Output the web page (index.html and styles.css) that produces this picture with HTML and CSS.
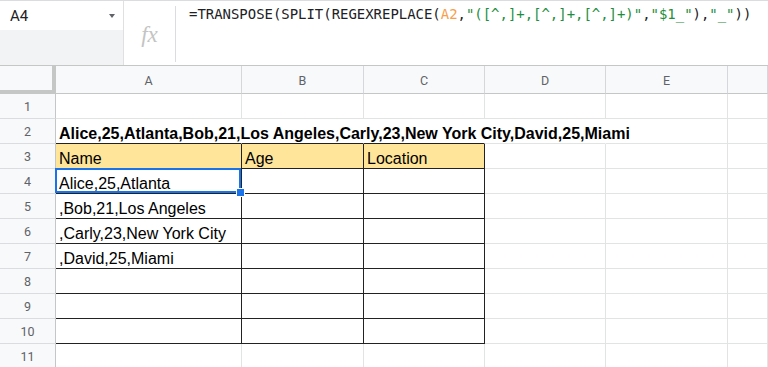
FILE: index.html
```html
<!DOCTYPE html>
<html lang="en">

<head>
    <meta charset="UTF-8">
    <meta name="viewport" content="width=device-width, initial-scale=1.0">
    <title>TRANSPOSE / SPLIT / REGEXREPLACE</title>
    <link rel="stylesheet" href="styles.css">
</head>

<body>

    <div class="formula-bar">
        <div class="name-box">
            <div class="name-box-field">
                <span>A4</span>
                <span class="arrow"></span>
            </div>
            <div class="name-box-rest"></div>
        </div>
        <div class="fx">fx</div>
        <div class="divider"></div>
        <div class="formula">=TRANSPOSE(SPLIT(REGEXREPLACE(<span class="ref">A2</span>,<span class="str">"([^,]+,[^,]+,[^,]+)"</span>,<span class="str">"$1_"</span>),<span class="str">"_"</span>))</div>
    </div>

    <div class="sheet">
        <div class="sheet-row col-headers">
            <div class="corner"></div>
            <div>A</div>
            <div>B</div>
            <div>C</div>
            <div>D</div>
            <div>E</div>
            <div></div>
        </div>

        <div class="sheet-row">
            <div class="row-num">1</div>
            <div class="cell"></div>
            <div class="cell"></div>
            <div class="cell"></div>
            <div class="cell"></div>
            <div class="cell"></div>
            <div class="cell"></div>
        </div>

        <!-- long text spills over B2:D2, so those gridlines are hidden -->
        <div class="sheet-row">
            <div class="row-num">2</div>
            <div class="cell bold spill tb-above">Alice,25,Atlanta,Bob,21,Los Angeles,Carly,23,New York City,David,25,Miami</div>
            <div class="cell spill tb-above"></div>
            <div class="cell spill tb-above"></div>
            <div class="cell spill"></div>
            <div class="cell"></div>
            <div class="cell"></div>
        </div>

        <div class="sheet-row">
            <div class="row-num">3</div>
            <div class="cell tb head">Name</div>
            <div class="cell tb head">Age</div>
            <div class="cell tb head">Location</div>
            <div class="cell"></div>
            <div class="cell"></div>
            <div class="cell"></div>
        </div>

        <div class="sheet-row">
            <div class="row-num">4</div>
            <div class="cell tb selected">Alice,25,Atlanta</div>
            <div class="cell tb"></div>
            <div class="cell tb"></div>
            <div class="cell"></div>
            <div class="cell"></div>
            <div class="cell"></div>
        </div>

        <div class="sheet-row">
            <div class="row-num">5</div>
            <div class="cell tb">,Bob,21,Los Angeles</div>
            <div class="cell tb"></div>
            <div class="cell tb"></div>
            <div class="cell"></div>
            <div class="cell"></div>
            <div class="cell"></div>
        </div>

        <div class="sheet-row">
            <div class="row-num">6</div>
            <div class="cell tb">,Carly,23,New York City</div>
            <div class="cell tb"></div>
            <div class="cell tb"></div>
            <div class="cell"></div>
            <div class="cell"></div>
            <div class="cell"></div>
        </div>

        <div class="sheet-row">
            <div class="row-num">7</div>
            <div class="cell tb">,David,25,Miami</div>
            <div class="cell tb"></div>
            <div class="cell tb"></div>
            <div class="cell"></div>
            <div class="cell"></div>
            <div class="cell"></div>
        </div>

        <div class="sheet-row">
            <div class="row-num">8</div>
            <div class="cell tb"></div>
            <div class="cell tb"></div>
            <div class="cell tb"></div>
            <div class="cell"></div>
            <div class="cell"></div>
            <div class="cell"></div>
        </div>

        <div class="sheet-row">
            <div class="row-num">9</div>
            <div class="cell tb"></div>
            <div class="cell tb"></div>
            <div class="cell tb"></div>
            <div class="cell"></div>
            <div class="cell"></div>
            <div class="cell"></div>
        </div>

        <div class="sheet-row">
            <div class="row-num">10</div>
            <div class="cell tb"></div>
            <div class="cell tb"></div>
            <div class="cell tb"></div>
            <div class="cell"></div>
            <div class="cell"></div>
            <div class="cell"></div>
        </div>

        <div class="sheet-row">
            <div class="row-num">11</div>
            <div class="cell"></div>
            <div class="cell"></div>
            <div class="cell"></div>
            <div class="cell"></div>
            <div class="cell"></div>
            <div class="cell"></div>
        </div>
    </div>

</body>

</html>
```

FILE: styles.css
```css
/* Google Sheets style grid */
body {
    margin: 0;
    width: 768px;
    height: 367px;
    overflow: hidden;
    background: #fff;
    font-family: "Liberation Sans", Arial, sans-serif;
}

* {
    box-sizing: border-box;
}

/* formula bar */
.formula-bar {
    display: flex;
    height: 66px;
    border-top: 1px solid #dadce0;
    border-bottom: 1px solid #c4c7c5;
}

.name-box {
    width: 124px;
    display: flex;
    flex-direction: column;
    border-right: 1px solid #e0e0e0;
}

.name-box-field {
    height: 29px;
    display: flex;
    align-items: center;
    justify-content: space-between;
    padding: 0 8px 0 10px;
    font-family: Roboto, "Liberation Sans", sans-serif;
    font-size: 15px;
    color: #202124;
}

.arrow {
    width: 0;
    height: 0;
    border-left: 3.5px solid transparent;
    border-right: 3.5px solid transparent;
    border-top: 4px solid #5f6368;
}

.name-box-rest {
    flex: 1;
    background: #f1f3f4;
}

.fx {
    width: 51px;
    display: flex;
    align-items: center;
    justify-content: center;
    padding-top: 3px;
    font-family: "Liberation Serif", serif;
    font-style: italic;
    font-size: 23px;
    color: #c4c4c4;
}

.divider {
    width: 1px;
    margin: 5px 0 3px;
    background: #dadce0;
}

.formula {
    padding: 5px 0 0 13px;
    font-family: "DejaVu Sans Mono", monospace;
    font-size: 13.95px;
    white-space: nowrap;
    color: #202124;
}

.formula .ref {
    color: #f6a04d;
}

.formula .str {
    color: #1e8e3e;
}

/* sheet grid */
.sheet-row {
    display: grid;
    grid-template-columns: 56px 186px 122px 121px 121px 122px 1fr;
    height: 25px;
}

.sheet-row > div {
    border-right: 1px solid #e2e3e3;
    border-bottom: 1px solid #e2e3e3;
}

.col-headers {
    height: 28px;
    background: #f8f9fa;
}

.col-headers > div {
    display: flex;
    align-items: center;
    justify-content: center;
    padding-top: 2px;
    font-family: Roboto, "Liberation Sans", sans-serif;
    font-size: 12.5px;
    color: #5f6368;
    border-right-color: #d5d7da;
    border-bottom-color: #c4c7c5;
}

.col-headers > .corner {
    border-right: 4px solid #c4c7c5;
    border-bottom: 4px solid #c4c7c5;
}

.row-num {
    display: flex;
    align-items: center;
    justify-content: center;
    background: #f8f9fa;
    font-family: Roboto, "Liberation Sans", sans-serif;
    font-size: 12.5px;
    color: #5f6368;
    border-right-color: #c4c7c5 !important;
    border-bottom-color: #dadce0 !important;
}

.cell {
    display: flex;
    align-items: flex-end;
    padding: 0 3px 0.5px;
    white-space: nowrap;
    font-size: 16px;
    color: #000;
}

.bold {
    font-weight: bold;
    position: relative;
    z-index: 1;
}

.sheet-row > .spill {
    border-right-color: transparent;
}

.sheet-row > .tb-above {
    border-bottom-color: #222;
}

.sheet-row > .tb {
    border-right-color: #222;
    border-bottom-color: #222;
}

.head {
    background: #ffe599;
}

.selected {
    position: relative;
}

.selected::after {
    content: "";
    position: absolute;
    left: -1px;
    top: -1px;
    right: 0;
    bottom: 0;
    border: 2px solid #1a73e8;
}

.selected::before {
    content: "";
    position: absolute;
    right: -4px;
    bottom: -4px;
    width: 7px;
    height: 7px;
    background: #1a73e8;
    border: 1px solid #fff;
    z-index: 2;
}
```
